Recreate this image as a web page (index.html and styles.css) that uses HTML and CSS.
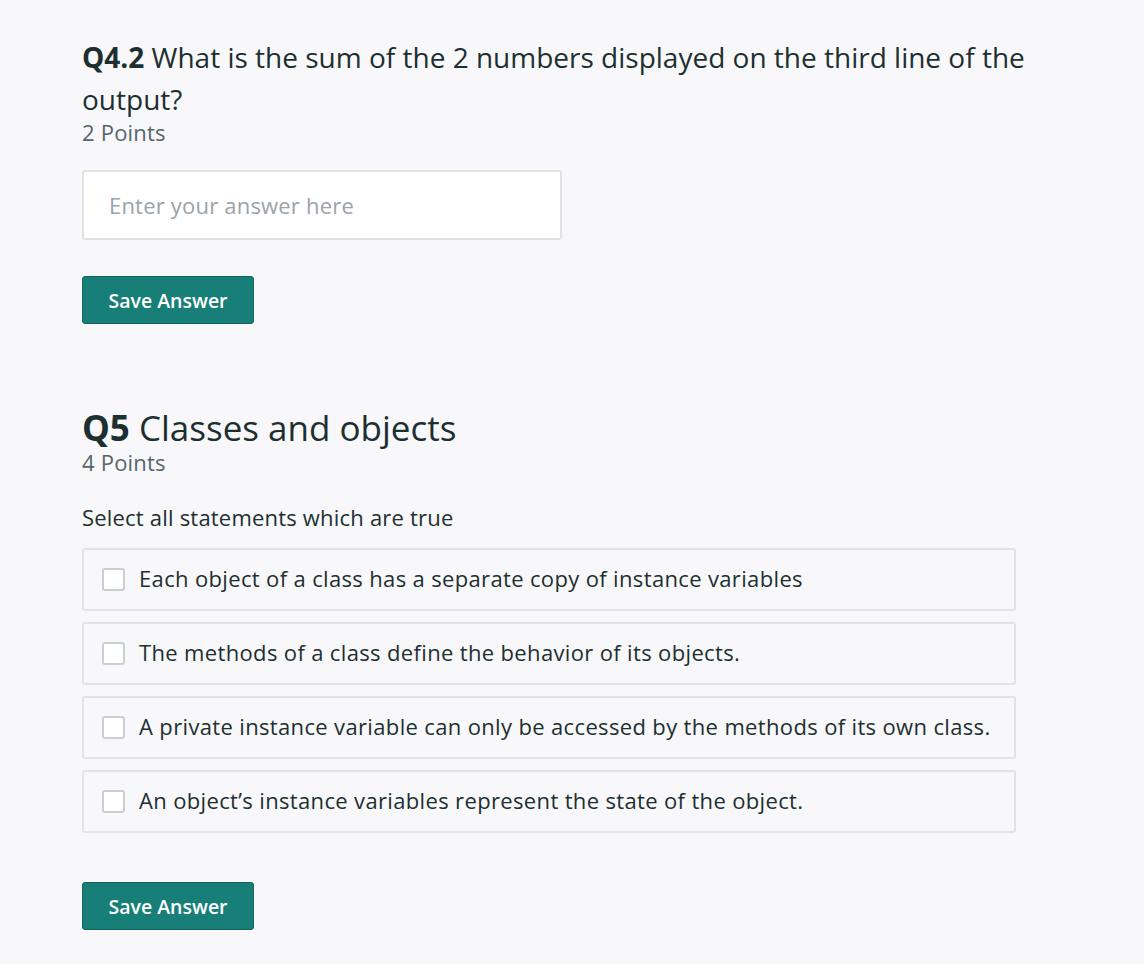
FILE: index.html
```html
<!DOCTYPE html>
<html lang="en">
<head>
    <meta charset="UTF-8">
    <meta name="viewport" content="width=device-width, initial-scale=1.0">
    <title>Quiz</title>
    <link rel="stylesheet" href="styles.css">
</head>
<body>

    <!-- Question 4.2 -->
    <section class="question">
        <h2 class="question-title"><strong>Q4.2</strong> What is the sum of the 2 numbers displayed on the third line of the output?</h2>
        <div class="question-points">2 Points</div>
        <input class="answer-input" type="text" placeholder="Enter your answer here">
        <button class="save-btn">Save Answer</button>
    </section>

    <!-- Question 5 -->
    <section class="question q5">
        <h2 class="question-title big"><strong>Q5</strong> Classes and objects</h2>
        <div class="question-points">4 Points</div>
        <p class="question-prompt">Select all statements which are true</p>
        <div class="options">
            <label class="option"><span class="checkbox"></span>Each object of a class has a separate copy of instance variables</label>
            <label class="option"><span class="checkbox"></span>The methods of a class define the behavior of its objects.</label>
            <label class="option"><span class="checkbox"></span>A private instance variable can only be accessed by the methods of its own class.</label>
            <label class="option"><span class="checkbox"></span>An object&rsquo;s instance variables represent the state of the object.</label>
        </div>
        <button class="save-btn">Save Answer</button>
    </section>

</body>
</html>
```

FILE: styles.css
```css
/* Page */
body {
    margin: 0;
    padding: 36px 0 0 82px;
    background-color: #f8f8fa;
    font-family: "Open Sans", "Lato", sans-serif;
    color: #1d2f31;
}

.question {
    width: 934px;
}

.question.q5 {
    margin-top: 82px;
}

/* Headings */
.question-title {
    margin: 0;
    font-size: 28px;
    font-weight: 400;
    line-height: 42px;
    width: 990px;
}

.question-title strong {
    font-weight: 700;
}

.question-title.big {
    font-size: 35px;
    line-height: 44px;
}

.question-points {
    font-size: 22px;
    line-height: 24px;
    letter-spacing: 0.2px;
    color: #56666a;
}

.question-prompt {
    margin: 30px 0 18px;
    font-size: 22px;
    line-height: 26px;
    letter-spacing: 0.2px;
}

/* Text answer */
.answer-input {
    display: block;
    box-sizing: border-box;
    width: 480px;
    height: 70px;
    margin-top: 26px;
    padding: 0 25px;
    background: #fff;
    border: 2px solid #e0e2e7;
    border-radius: 3px;
    font-family: inherit;
    font-size: 22px;
    letter-spacing: 0.2px;
    color: #1d2f31;
}

.answer-input::placeholder {
    color: #9aa2aa;
}

/* Save button */
.save-btn {
    display: block;
    box-sizing: border-box;
    width: 172px;
    height: 48px;
    margin-top: 36px;
    background: #177f78;
    border: 1px solid #12655f;
    border-radius: 3px;
    color: #fff;
    font-family: inherit;
    font-size: 19.5px;
    font-weight: 600;
    cursor: pointer;
}

.q5 .save-btn {
    margin-top: 49px;
}

/* Checkbox options */
.options {
    display: flex;
    flex-direction: column;
    gap: 11px;
}

.option {
    display: flex;
    align-items: center;
    box-sizing: border-box;
    height: 63px;
    padding: 0 18px 3px;
    border: 2px solid #e0e3e8;
    border-radius: 3px;
    font-size: 22px;
    letter-spacing: 0.35px;
    cursor: pointer;
}

.checkbox {
    flex: none;
    box-sizing: border-box;
    width: 23px;
    height: 23px;
    margin: 2px 14px 0 0;
    background: #fff;
    border: 2px solid #c9cfd5;
    border-radius: 3px;
}
```
